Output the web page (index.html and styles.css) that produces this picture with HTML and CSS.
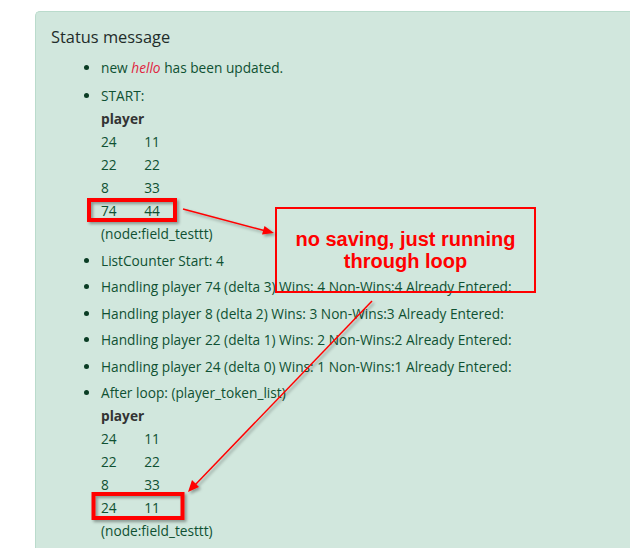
FILE: index.html
```html
<!DOCTYPE html>
<html>
<head>
<meta charset="utf-8">
<link rel="stylesheet" href="styles.css">
</head>
<body>
<div class="alert">
  <h2 class="title">Status message</h2>
  <ul class="messages">
    <li class="first">new <em class="placeholder">hello</em> has been updated.</li>
    <li>START:
      <table class="grid">
        <tr><th>player</th><th></th></tr>
        <tr><td>24</td><td>11</td></tr>
        <tr><td>22</td><td>22</td></tr>
        <tr><td>8</td><td>33</td></tr>
        <tr><td>74</td><td>44</td></tr>
      </table>
      <div>(node:field_testtt)</div>
    </li>
    <li>ListCounter Start: 4</li>
    <li>Handling player 74 (delta 3) Wins: 4 Non-Wins:4 Already Entered:</li>
    <li>Handling player 8 (delta 2) Wins: 3 Non-Wins:3 Already Entered:</li>
    <li>Handling player 22 (delta 1) Wins: 2 Non-Wins:2 Already Entered:</li>
    <li>Handling player 24 (delta 0) Wins: 1 Non-Wins:1 Already Entered:</li>
    <li>After loop: (player_token_list)
      <table class="grid">
        <tr><th>player</th><th></th></tr>
        <tr><td>24</td><td>11</td></tr>
        <tr><td>22</td><td>22</td></tr>
        <tr><td>8</td><td>33</td></tr>
        <tr><td>24</td><td>11</td></tr>
      </table>
      <div class="last">(node:field_testtt)</div>
    </li>
  </ul>
</div>

<div class="note">no saving, just running<br>through loop</div>

<svg class="overlay" width="630" height="548" viewBox="0 0 630 548">
  <defs>
    <filter id="sh" x="-20%" y="-20%" width="140%" height="140%">
      <feDropShadow dx="2" dy="2" stdDeviation="1.5" flood-color="#000" flood-opacity="0.35"/>
    </filter>
  </defs>
  <g filter="url(#sh)">
    <rect x="89" y="200" width="86" height="20" fill="none" stroke="#ff0000" stroke-width="4"/>
    <rect x="93.5" y="494" width="89" height="24" fill="none" stroke="#ff0000" stroke-width="4"/>
    <line x1="183" y1="209" x2="264" y2="230.5" stroke="#ff0000" stroke-width="1.5"/>
    <polygon points="274,233 262,234.5 264.5,226" fill="#ff0000"/>
    <line x1="372" y1="301" x2="195" y2="485" stroke="#ff0000" stroke-width="1.5"/>
    <polygon points="188,492 192,480 199,487" fill="#ff0000"/>
  </g>
</svg>
</body>
</html>
```

FILE: styles.css
```css
html, body {
  margin: 0;
  padding: 0;
  background: #ffffff;
  width: 630px;
  height: 548px;
  overflow: hidden;
}

body {
  position: relative;
  font-family: "Open Sans", "Noto Sans", sans-serif;
  font-size: 13.7px;
  color: #0f5132;
}

.alert {
  margin: 11px 0 0 35px;
  width: 595px;
  height: 537px;
  overflow: hidden;
  box-sizing: border-box;
  background: #d1e7dd;
  border: 1px solid #badbcc;
  border-right: none;
  border-bottom: none;
  border-radius: 5px 0 0 0;
  padding: 15px 0 0 15px;
}

.title {
  margin: 0 0 9px 0;
  font-size: 16.4px;
  font-weight: normal;
  line-height: 20px;
  color: #1f2d2a;
}

.messages {
  margin: 0;
  padding-left: 50px;
  line-height: 23px;
}

.messages li {
  margin-bottom: 3.5px;
}

.messages li.first {
  margin-bottom: 5px;
}

.messages li::marker {
  color: #0a3d24;
}

.placeholder {
  color: #e0243f;
}

.grid {
  border-collapse: collapse;
  border-spacing: 0;
}

.grid th,
.grid td {
  padding: 0;
  text-align: left;
  height: 23px;
  line-height: 23px;
}

.grid th {
  font-weight: bold;
  color: #333333;
}

.grid td:first-child,
.grid th:first-child {
  width: 42px;
}

.note {
  position: absolute;
  left: 275px;
  top: 207px;
  width: 261px;
  height: 86px;
  box-sizing: border-box;
  border: 2px solid #ff0000;
  padding-top: 19px;
  text-align: center;
  font-family: "Liberation Sans", Arial, sans-serif;
  font-weight: bold;
  font-size: 20px;
  line-height: 22px;
  color: #ff0000;
}

.overlay {
  position: absolute;
  left: 0;
  top: 0;
}
```
